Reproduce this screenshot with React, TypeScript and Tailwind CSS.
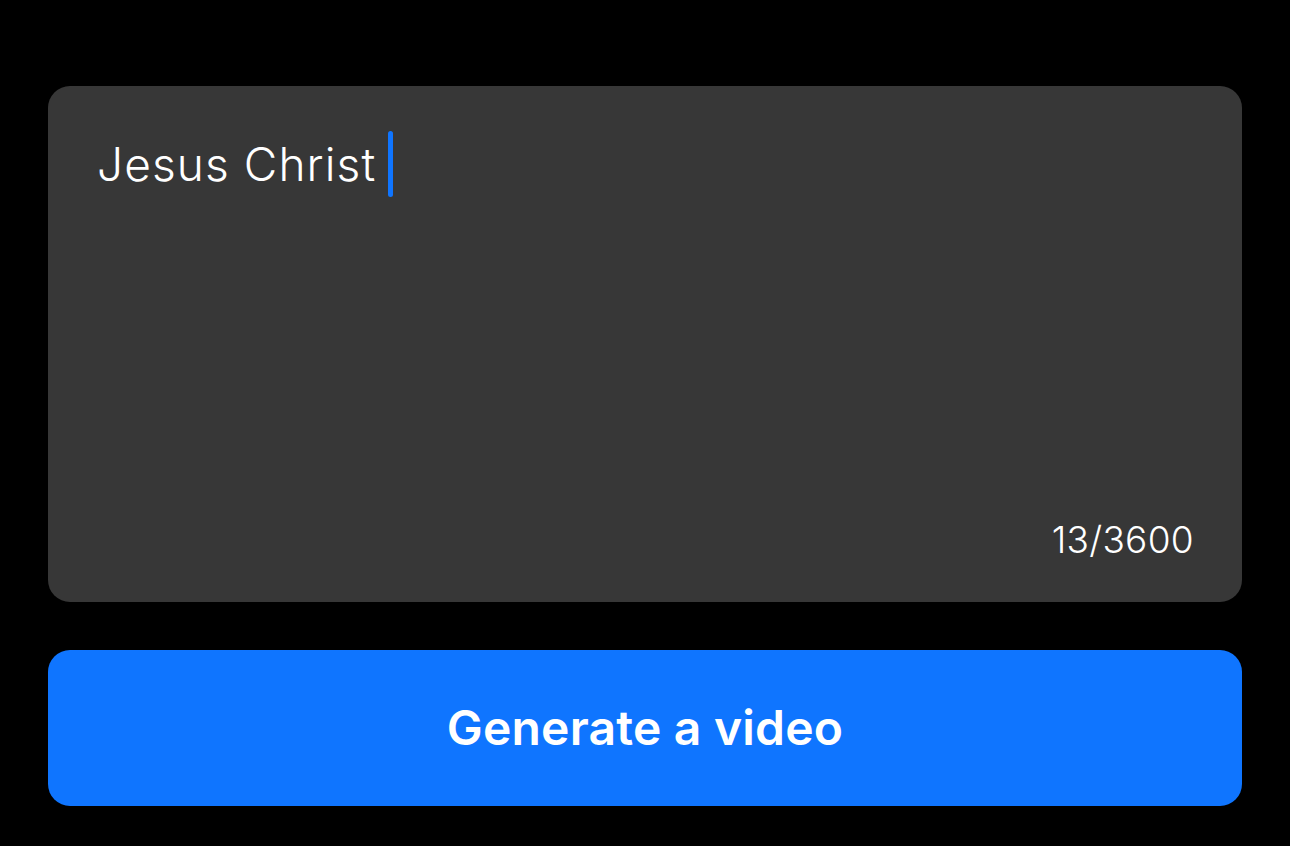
import React from "react";

export default function App() {
  return (
    <div
      className="w-[1290px] h-[846px] bg-black flex flex-col px-[48px] pt-[86px] gap-[48px]"
      style={{ fontFamily: "Inter, 'Noto Sans', sans-serif" }}
    >
      <div className="h-[516px] bg-[#373737] rounded-[22px] flex flex-col justify-between pl-[49px] pr-[48px] pt-[45px] pb-[40px]">
        <div className="flex items-center">
          <span className="text-white text-[46px] font-light leading-[58px] tracking-[1.1px]">Jesus Christ</span>
          <span className="ml-[12px] w-[5px] h-[66px] rounded-full bg-[#0F75FF]" />
        </div>
        <div className="self-end text-white text-[37px] font-light leading-[44px] tracking-[0.3px]">13/3600</div>
      </div>
      <button className="h-[156px] bg-[#0F75FF] rounded-[22px] text-white text-[48px] font-semibold flex items-center justify-center tracking-[0.2px]">
        Generate a video
      </button>
    </div>
  );
}
